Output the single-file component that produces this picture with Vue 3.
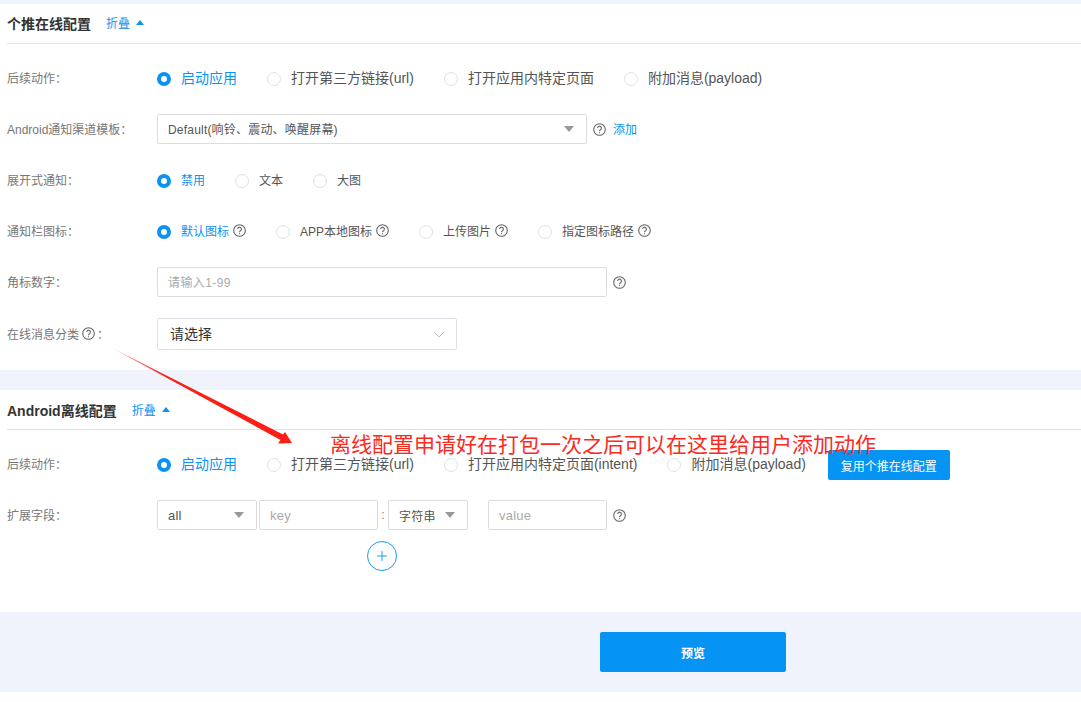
<script setup>
import { ref } from 'vue'

const onlineAction = ref('launch')

const onlineActions = [
  { id: 'launch', label: '启动应用' },
  { id: 'url', label: '打开第三方链接(url)' },
  { id: 'page', label: '打开应用内特定页面' },
  { id: 'payload', label: '附加消息(payload)' }
]

const offlineActions = [
  { id: 'launch', label: '启动应用' },
  { id: 'url', label: '打开第三方链接(url)' },
  { id: 'page', label: '打开应用内特定页面(intent)' },
  { id: 'payload', label: '附加消息(payload)' }
]

const expandOptions = [
  { id: 'off', label: '禁用' },
  { id: 'text', label: '文本' },
  { id: 'image', label: '大图' }
]

const iconOptions = [
  { id: 'default', label: '默认图标' },
  { id: 'local', label: 'APP本地图标' },
  { id: 'upload', label: '上传图片' },
  { id: 'path', label: '指定图标路径' }
]
</script>

<template>
  <div class="page">
    <section class="section first">
      <div class="section-head">
        <h3>个推在线配置</h3>
        <a class="fold">折叠<i class="caret-up"></i></a>
      </div>
      <div class="form">
        <div class="row">
          <label class="label">后续动作：</label>
          <div class="radios big">
            <span
              v-for="item in onlineActions"
              :key="item.id"
              class="radio"
              :class="{ on: item.id === onlineAction }"
            ><i class="dot"></i>{{ item.label }}</span>
          </div>
        </div>
        <div class="row">
          <label class="label">Android通知渠道模板：</label>
          <div class="select wide">
            <span>Default(响铃、震动、唤醒屏幕)</span>
            <i class="caret-down"></i>
          </div>
          <svg class="help" viewBox="0 0 13 13"><circle cx="6.5" cy="6.5" r="5.8" /><path d="M4.6 5.1a1.9 1.9 0 1 1 2.9 1.6c-.7.4-1 .8-1 1.5M6.5 9.3v1" /></svg>
          <a class="add">添加</a>
        </div>
        <div class="row">
          <label class="label">展开式通知：</label>
          <div class="radios">
            <span
              v-for="(item, i) in expandOptions"
              :key="item.id"
              class="radio"
              :class="{ on: i === 0 }"
            ><i class="dot"></i>{{ item.label }}</span>
          </div>
        </div>
        <div class="row">
          <label class="label">通知栏图标：</label>
          <div class="radios">
            <span
              v-for="(item, i) in iconOptions"
              :key="item.id"
              class="radio"
              :class="{ on: i === 0 }"
            ><i class="dot"></i>{{ item.label }}<svg class="help inline" viewBox="0 0 13 13"><circle cx="6.5" cy="6.5" r="5.8" /><path d="M4.6 5.1a1.9 1.9 0 1 1 2.9 1.6c-.7.4-1 .8-1 1.5M6.5 9.3v1" /></svg></span>
          </div>
        </div>
        <div class="row">
          <label class="label">角标数字：</label>
          <div class="input badge">请输入1-99</div>
          <svg class="help" viewBox="0 0 13 13"><circle cx="6.5" cy="6.5" r="5.8" /><path d="M4.6 5.1a1.9 1.9 0 1 1 2.9 1.6c-.7.4-1 .8-1 1.5M6.5 9.3v1" /></svg>
        </div>
        <div class="row">
          <label class="label">在线消息分类<svg class="help label-help" viewBox="0 0 13 13"><circle cx="6.5" cy="6.5" r="5.8" /><path d="M4.6 5.1a1.9 1.9 0 1 1 2.9 1.6c-.7.4-1 .8-1 1.5M6.5 9.3v1" /></svg>：</label>
          <div class="picker">
            <span>请选择</span>
            <svg class="chevron" viewBox="0 0 12 7"><path d="M1 1l5 5 5-5" /></svg>
          </div>
        </div>
      </div>
    </section>

    <section class="section second">
      <div class="section-head">
        <h3>Android离线配置</h3>
        <a class="fold">折叠<i class="caret-up"></i></a>
      </div>
      <div class="form">
        <div class="row">
          <label class="label">后续动作：</label>
          <div class="radios big">
            <span
              v-for="(item, i) in offlineActions"
              :key="item.id"
              class="radio"
              :class="{ on: i === 0 }"
            ><i class="dot"></i>{{ item.label }}</span>
          </div>
          <button class="reuse">复用个推在线配置</button>
        </div>
        <div class="row">
          <label class="label">扩展字段：</label>
          <div class="select platform"><span>all</span><i class="caret-down"></i></div>
          <div class="input key">key</div>
          <span class="colon">:</span>
          <div class="select type"><span>字符串</span><i class="caret-down"></i></div>
          <div class="input value">value</div>
          <svg class="help" viewBox="0 0 13 13"><circle cx="6.5" cy="6.5" r="5.8" /><path d="M4.6 5.1a1.9 1.9 0 1 1 2.9 1.6c-.7.4-1 .8-1 1.5M6.5 9.3v1" /></svg>
        </div>
        <button class="plus">
          <svg viewBox="0 0 10 10"><path d="M5 0v10M0 5h10" /></svg>
        </button>
      </div>
    </section>

    <footer class="footer">
      <button class="preview">预览</button>
    </footer>

    <!-- annotation pasted over the screenshot -->
    <svg class="arrow" viewBox="0 0 1081 702">
      <defs>
        <linearGradient id="arrowFade" gradientUnits="userSpaceOnUse" x1="113" y1="349" x2="170" y2="378">
          <stop offset="0" stop-color="#fa1e14" stop-opacity="0.5" />
          <stop offset="1" stop-color="#fa1e14" />
        </linearGradient>
      </defs>
      <polygon fill="url(#arrowFade)" points="113,348.5 283,434.5 285,432 292,443 278,443.5 280.5,440" />
    </svg>
    <div class="note">离线配置申请好在打包一次之后可以在这里给用户添加动作</div>
  </div>
</template>

<style scoped>
.page {
  position: relative;
  width: 1081px;
  height: 692px;
  padding-top: 4px;
  box-sizing: border-box;
  background: #f0f3fb;
  font-family: "Liberation Sans", "Noto Sans CJK SC", sans-serif;
  font-size: 12px;
  color: #555;
}

.section {
  padding-left: 7px;
  background: #fff;
}

.first {
  padding-bottom: 20px;
}

.first .section-head h3,
.first .fold {
  margin-bottom: 2px;
}

.second {
  margin-top: 20px;
}

.section-head {
  display: flex;
  align-items: center;
  height: 39px;
  border-bottom: 1px solid #e2e2e2;
}

.section-head h3 {
  margin: 0;
  font-size: 14px;
  font-weight: 700;
  color: #333;
}

.fold {
  display: flex;
  align-items: center;
  margin-left: 15px;
  font-size: 12px;
  color: #0a93f0;
}

.caret-up {
  width: 0;
  height: 0;
  margin-left: 6px;
  border-left: 4px solid transparent;
  border-right: 4px solid transparent;
  border-bottom: 5px solid #0a93f0;
}

.caret-down {
  width: 0;
  height: 0;
  border-left: 5px solid transparent;
  border-right: 5px solid transparent;
  border-top: 6px solid #999;
}

.form {
  display: flex;
  flex-direction: column;
  gap: 21px;
  padding-top: 19px;
}

.second .form {
  padding-bottom: 41px;
}

.row {
  display: flex;
  align-items: center;
  min-height: 30px;
}

.label {
  display: flex;
  align-items: center;
  flex: 0 0 150px;
  padding-bottom: 2px;
  color: #777;
  font-size: 12px;
}

.radios {
  display: flex;
  align-items: center;
  gap: 30px;
  color: #555;
}

.radios.big {
  font-size: 14px;
}

.radio {
  display: flex;
  align-items: center;
  padding-bottom: 2px;
}

.dot {
  box-sizing: border-box;
  width: 14px;
  height: 14px;
  margin: 3px 10px 0 0;
  border: 1px solid #dfe2e8;
  border-radius: 50%;
  background: #fff;
}

.radio.on {
  color: #0a93f0;
}

.radio.on .dot {
  border: 4px solid #0a93f0;
}

.select,
.input {
  display: flex;
  align-items: center;
  justify-content: space-between;
  box-sizing: border-box;
  height: 30px;
  padding: 0 12px 0 10px;
  border: 1px solid #dcdcdc;
  border-radius: 2px;
  background: #fff;
  letter-spacing: 0.2px;
}

.select {
  color: #555;
}

.input {
  color: #aaa;
}

.wide {
  width: 430px;
  padding-bottom: 2px;
}

.wide .caret-down {
  margin-top: 2px;
}

.badge {
  width: 450px;
  padding-bottom: 2px;
  letter-spacing: 0.4px;
}

.picker {
  display: flex;
  align-items: center;
  justify-content: space-between;
  box-sizing: border-box;
  width: 300px;
  height: 32px;
  padding: 0 11px 2px 12px;
  border: 1px solid #dcdfe6;
  border-radius: 2px;
  font-size: 14px;
  color: #333;
}

.chevron {
  width: 12px;
  height: 7px;
  margin-top: 2px;
  fill: none;
  stroke: #c0c4cc;
}

.help {
  flex: none;
  width: 13px;
  height: 13px;
  margin-left: 6px;
  fill: none;
  stroke: #666;
  stroke-width: 1.1;
}

.help.inline {
  margin: 1px 0 0 4px;
}

.help.label-help {
  margin: 0 2px 0 3px;
}

.add {
  margin-left: 7px;
  padding-bottom: 2px;
  color: #0a93f0;
}

.platform {
  width: 100px;
  padding-top: 1px;
  font-size: 13px;
}

.platform .caret-down {
  margin-top: -1px;
}

.key {
  width: 119px;
  margin-left: 2px;
  padding-top: 1px;
  font-size: 13px;
}

.colon {
  width: 10px;
  text-align: center;
  color: #777;
}

.type {
  width: 80px;
}

.value {
  width: 119px;
  margin-left: 20px;
  padding-top: 1px;
  font-size: 13px;
}

.reuse {
  width: 122px;
  height: 30px;
  margin: 1px 0 -1px 22px;
  padding: 0;
  border: 0;
  border-radius: 2px;
  background: #0594f3;
  color: #fff;
  font: inherit;
}

.plus {
  display: flex;
  align-items: center;
  justify-content: center;
  box-sizing: border-box;
  width: 30px;
  height: 30px;
  margin: -10px 0 0 360px;
  padding: 0;
  border: 1px solid #1a9bf0;
  border-radius: 50%;
  background: #fff;
}

.plus svg {
  width: 10px;
  height: 10px;
  fill: none;
  stroke: #1a9bf0;
}

.footer {
  display: flex;
  height: 80px;
  box-sizing: border-box;
  padding: 20px 0 20px 600px;
  background: #f0f3fb;
}

.preview {
  width: 186px;
  height: 40px;
  padding: 0;
  border: 0;
  border-radius: 2px;
  background: #0594f3;
  color: #fff;
  font: inherit;
  font-weight: 700;
}

.arrow {
  position: absolute;
  left: 0;
  top: 0;
  width: 1081px;
  height: 702px;
  pointer-events: none;
}

.note {
  position: absolute;
  left: 330px;
  top: 431px;
  font-size: 21px;
  line-height: 28px;
  color: #fb2a1f;
  white-space: nowrap;
}
</style>

<style>
body {
  background: #fff;
}
</style>
